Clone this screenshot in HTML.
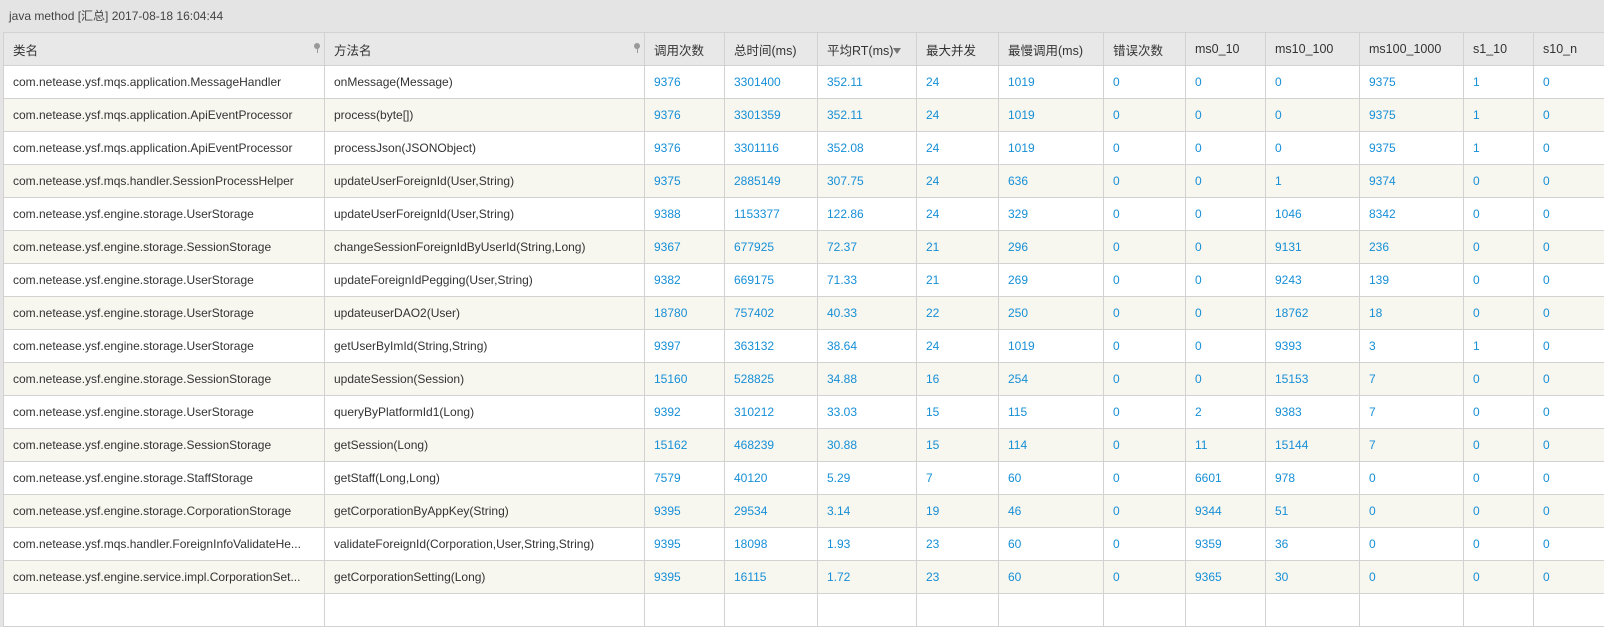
<!DOCTYPE html>
<html><head><meta charset="utf-8"><style>
body{margin:0;width:1604px;height:595px;overflow:hidden;background:#fff;font-family:"Liberation Sans","Noto Sans CJK SC",sans-serif;font-size:12px;color:#333}
.t{height:32px;background:#e4e4e4;line-height:32px;padding-left:9px;box-sizing:border-box;color:#444}
.wrap{background:#e4e4e4;padding-left:3px}
table{border-collapse:collapse;table-layout:fixed;width:1601px;background:#fff}
td,th{border:1px solid #d2d2d2;height:32px;padding:0 0 0 9px;text-align:left;font-weight:normal;white-space:nowrap;overflow:hidden;text-overflow:ellipsis;position:relative}
th{background:#e8e8e8;color:#333;font-size:12.5px}
tr:nth-child(odd) td{background:#f7f6ef}
td.n{color:#168fd6}
.pin{position:absolute;right:4px;top:10px;width:6px;height:6px;border-radius:50%;background:#999}
.pin:after{content:"";position:absolute;left:2.5px;top:5px;width:1px;height:5px;background:#999}
.tri{display:inline-block;width:0;height:0;border-left:4px solid transparent;border-right:4px solid transparent;border-top:6px solid #777;vertical-align:1px}
</style></head><body>
<div class="t">java method [汇总] 2017-08-18 16:04:44</div>
<div class="wrap"><table>
<colgroup><col style="width:321px"><col style="width:320px"><col style="width:80px"><col style="width:93px"><col style="width:99px"><col style="width:82px"><col style="width:105px"><col style="width:82px"><col style="width:80px"><col style="width:94px"><col style="width:104px"><col style="width:70px"><col style="width:71px"></colgroup>
<tr><th>类名<span class="pin"></span></th><th>方法名<span class="pin"></span></th><th>调用次数</th><th>总时间(ms)</th><th>平均RT(ms)<span class="tri"></span></th><th>最大并发</th><th>最慢调用(ms)</th><th>错误次数</th><th>ms0_10</th><th>ms10_100</th><th>ms100_1000</th><th>s1_10</th><th>s10_n</th></tr>
<tr><td>com.netease.ysf.mqs.application.MessageHandler</td><td>onMessage(Message)</td><td class="n">9376</td><td class="n">3301400</td><td class="n">352.11</td><td class="n">24</td><td class="n">1019</td><td class="n">0</td><td class="n">0</td><td class="n">0</td><td class="n">9375</td><td class="n">1</td><td class="n">0</td></tr>
<tr><td>com.netease.ysf.mqs.application.ApiEventProcessor</td><td>process(byte[])</td><td class="n">9376</td><td class="n">3301359</td><td class="n">352.11</td><td class="n">24</td><td class="n">1019</td><td class="n">0</td><td class="n">0</td><td class="n">0</td><td class="n">9375</td><td class="n">1</td><td class="n">0</td></tr>
<tr><td>com.netease.ysf.mqs.application.ApiEventProcessor</td><td>processJson(JSONObject)</td><td class="n">9376</td><td class="n">3301116</td><td class="n">352.08</td><td class="n">24</td><td class="n">1019</td><td class="n">0</td><td class="n">0</td><td class="n">0</td><td class="n">9375</td><td class="n">1</td><td class="n">0</td></tr>
<tr><td>com.netease.ysf.mqs.handler.SessionProcessHelper</td><td>updateUserForeignId(User,String)</td><td class="n">9375</td><td class="n">2885149</td><td class="n">307.75</td><td class="n">24</td><td class="n">636</td><td class="n">0</td><td class="n">0</td><td class="n">1</td><td class="n">9374</td><td class="n">0</td><td class="n">0</td></tr>
<tr><td>com.netease.ysf.engine.storage.UserStorage</td><td>updateUserForeignId(User,String)</td><td class="n">9388</td><td class="n">1153377</td><td class="n">122.86</td><td class="n">24</td><td class="n">329</td><td class="n">0</td><td class="n">0</td><td class="n">1046</td><td class="n">8342</td><td class="n">0</td><td class="n">0</td></tr>
<tr><td>com.netease.ysf.engine.storage.SessionStorage</td><td>changeSessionForeignIdByUserId(String,Long)</td><td class="n">9367</td><td class="n">677925</td><td class="n">72.37</td><td class="n">21</td><td class="n">296</td><td class="n">0</td><td class="n">0</td><td class="n">9131</td><td class="n">236</td><td class="n">0</td><td class="n">0</td></tr>
<tr><td>com.netease.ysf.engine.storage.UserStorage</td><td>updateForeignIdPegging(User,String)</td><td class="n">9382</td><td class="n">669175</td><td class="n">71.33</td><td class="n">21</td><td class="n">269</td><td class="n">0</td><td class="n">0</td><td class="n">9243</td><td class="n">139</td><td class="n">0</td><td class="n">0</td></tr>
<tr><td>com.netease.ysf.engine.storage.UserStorage</td><td>updateuserDAO2(User)</td><td class="n">18780</td><td class="n">757402</td><td class="n">40.33</td><td class="n">22</td><td class="n">250</td><td class="n">0</td><td class="n">0</td><td class="n">18762</td><td class="n">18</td><td class="n">0</td><td class="n">0</td></tr>
<tr><td>com.netease.ysf.engine.storage.UserStorage</td><td>getUserByImId(String,String)</td><td class="n">9397</td><td class="n">363132</td><td class="n">38.64</td><td class="n">24</td><td class="n">1019</td><td class="n">0</td><td class="n">0</td><td class="n">9393</td><td class="n">3</td><td class="n">1</td><td class="n">0</td></tr>
<tr><td>com.netease.ysf.engine.storage.SessionStorage</td><td>updateSession(Session)</td><td class="n">15160</td><td class="n">528825</td><td class="n">34.88</td><td class="n">16</td><td class="n">254</td><td class="n">0</td><td class="n">0</td><td class="n">15153</td><td class="n">7</td><td class="n">0</td><td class="n">0</td></tr>
<tr><td>com.netease.ysf.engine.storage.UserStorage</td><td>queryByPlatformId1(Long)</td><td class="n">9392</td><td class="n">310212</td><td class="n">33.03</td><td class="n">15</td><td class="n">115</td><td class="n">0</td><td class="n">2</td><td class="n">9383</td><td class="n">7</td><td class="n">0</td><td class="n">0</td></tr>
<tr><td>com.netease.ysf.engine.storage.SessionStorage</td><td>getSession(Long)</td><td class="n">15162</td><td class="n">468239</td><td class="n">30.88</td><td class="n">15</td><td class="n">114</td><td class="n">0</td><td class="n">11</td><td class="n">15144</td><td class="n">7</td><td class="n">0</td><td class="n">0</td></tr>
<tr><td>com.netease.ysf.engine.storage.StaffStorage</td><td>getStaff(Long,Long)</td><td class="n">7579</td><td class="n">40120</td><td class="n">5.29</td><td class="n">7</td><td class="n">60</td><td class="n">0</td><td class="n">6601</td><td class="n">978</td><td class="n">0</td><td class="n">0</td><td class="n">0</td></tr>
<tr><td>com.netease.ysf.engine.storage.CorporationStorage</td><td>getCorporationByAppKey(String)</td><td class="n">9395</td><td class="n">29534</td><td class="n">3.14</td><td class="n">19</td><td class="n">46</td><td class="n">0</td><td class="n">9344</td><td class="n">51</td><td class="n">0</td><td class="n">0</td><td class="n">0</td></tr>
<tr><td>com.netease.ysf.mqs.handler.ForeignInfoValidateHe...</td><td>validateForeignId(Corporation,User,String,String)</td><td class="n">9395</td><td class="n">18098</td><td class="n">1.93</td><td class="n">23</td><td class="n">60</td><td class="n">0</td><td class="n">9359</td><td class="n">36</td><td class="n">0</td><td class="n">0</td><td class="n">0</td></tr>
<tr><td>com.netease.ysf.engine.service.impl.CorporationSet...</td><td>getCorporationSetting(Long)</td><td class="n">9395</td><td class="n">16115</td><td class="n">1.72</td><td class="n">23</td><td class="n">60</td><td class="n">0</td><td class="n">9365</td><td class="n">30</td><td class="n">0</td><td class="n">0</td><td class="n">0</td></tr>
<tr><td></td><td></td><td></td><td></td><td></td><td></td><td></td><td></td><td></td><td></td><td></td><td></td><td></td></tr>
</table></div>
</body></html>
